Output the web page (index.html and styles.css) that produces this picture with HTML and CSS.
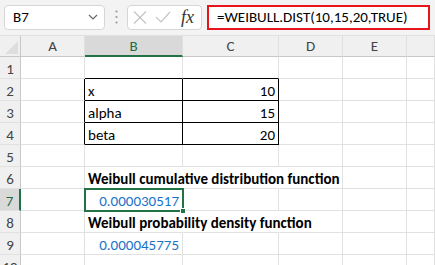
FILE: index.html
```html
<!DOCTYPE html>
<html lang="en">
<head>
    <meta charset="UTF-8">
    <title>WEIBULL.DIST</title>
    <link rel="stylesheet" href="styles.css">
</head>
<body>
    <div class="toolbar">
        <div class="namebox">
            <span>B7</span>
            <svg class="chev" width="10" height="6" viewBox="0 0 10 6"><path d="M1 1 L5 5 L9 1" fill="none" stroke="#666" stroke-width="1.2"/></svg>
        </div>
        <div class="sep">
            <svg width="3" height="14" viewBox="0 0 3 14"><circle cx="1.5" cy="1.5" r="1.1" fill="#999"/><circle cx="1.5" cy="7" r="1.1" fill="#999"/><circle cx="1.5" cy="12.5" r="1.1" fill="#999"/></svg>
        </div>
        <div class="fxbox">
            <svg width="14" height="13" viewBox="0 0 14 13"><path d="M1 0.5 L13 12.5 M13 0.5 L1 12.5" stroke="#c4c4c4" stroke-width="1.2" fill="none"/></svg>
            <svg width="16" height="12" viewBox="0 0 16 12"><path d="M1 6 L6 11 L15 1" stroke="#c4c4c4" stroke-width="1.2" fill="none"/></svg>
            <span class="fx">fx</span>
        </div>
        <div class="formula">=WEIBULL.DIST(10,15,20,TRUE)</div>
    </div>

    <div class="sheet">
        <!-- header -->
        <div class="corner"></div>
        <div class="colhead">A</div>
        <div class="colhead active">B</div>
        <div class="colhead">C</div>
        <div class="colhead">D</div>
        <div class="colhead">E</div>
        <div class="colhead"></div>

        <!-- 1 -->
        <div class="rowhead">1</div>
        <div class="cell"></div>
        <div class="cell bb"></div>
        <div class="cell bb"></div>
        <div class="cell"></div>
        <div class="cell"></div>
        <div class="cell"></div>

        <!-- 2 -->
        <div class="rowhead">2</div>
        <div class="cell br"></div>
        <div class="cell box">x</div>
        <div class="cell box num">10</div>
        <div class="cell"></div>
        <div class="cell"></div>
        <div class="cell"></div>

        <!-- 3 -->
        <div class="rowhead">3</div>
        <div class="cell br"></div>
        <div class="cell box">alpha</div>
        <div class="cell box num">15</div>
        <div class="cell"></div>
        <div class="cell"></div>
        <div class="cell"></div>

        <!-- 4 -->
        <div class="rowhead">4</div>
        <div class="cell br"></div>
        <div class="cell box">beta</div>
        <div class="cell box num">20</div>
        <div class="cell"></div>
        <div class="cell"></div>
        <div class="cell"></div>

        <!-- 5 -->
        <div class="rowhead">5</div>
        <div class="cell"></div>
        <div class="cell"></div>
        <div class="cell"></div>
        <div class="cell"></div>
        <div class="cell"></div>
        <div class="cell"></div>

        <!-- 6 -->
        <div class="rowhead">6</div>
        <div class="cell"></div>
        <div class="cell bold spill">Weibull cumulative distribution function</div>
        <div class="cell spill"></div>
        <div class="cell"></div>
        <div class="cell"></div>
        <div class="cell"></div>

        <!-- 7 -->
        <div class="rowhead active">7</div>
        <div class="cell"></div>
        <div class="cell num blue selected">0.000030517<div class="sel"><span class="handle"></span></div></div>
        <div class="cell"></div>
        <div class="cell"></div>
        <div class="cell"></div>
        <div class="cell"></div>

        <!-- 8 -->
        <div class="rowhead">8</div>
        <div class="cell"></div>
        <div class="cell bold spill">Weibull probability density function</div>
        <div class="cell spill"></div>
        <div class="cell"></div>
        <div class="cell"></div>
        <div class="cell"></div>

        <!-- 9 -->
        <div class="rowhead">9</div>
        <div class="cell"></div>
        <div class="cell num blue">0.000045775</div>
        <div class="cell"></div>
        <div class="cell"></div>
        <div class="cell"></div>
        <div class="cell"></div>

        <!-- 10 -->
        <div class="rowhead">10</div>
        <div class="cell"></div>
        <div class="cell"></div>
        <div class="cell"></div>
        <div class="cell"></div>
        <div class="cell"></div>
        <div class="cell"></div>
    </div>
</body>
</html>
```

FILE: styles.css
```css
* {
    box-sizing: border-box;
}

body {
    margin: 0;
    width: 435px;
    height: 265px;
    overflow: hidden;
    background: #ffffff;
    font-family: Carlito, Lato, "Liberation Sans", sans-serif;
    font-size: 15px;
    color: #000;
}

/* barra de fórmulas */
.toolbar {
    display: flex;
    align-items: center;
    height: 36px;
    padding: 0 5px 1px 4px;
    background: #f3f3f3;
    border-bottom: 1px solid #e0e0e0;
}

.namebox {
    display: flex;
    align-items: center;
    justify-content: space-between;
    width: 101px;
    height: 25px;
    padding: 0 6px 0 8px;
    background: #fff;
    border: 1px solid #d6d6d6;
    border-radius: 4px;
    font-size: 15px;
}

.sep {
    display: flex;
    justify-content: center;
    align-items: center;
    width: 22px;
}

.fxbox {
    display: flex;
    align-items: center;
    width: 75px;
    height: 25px;
    padding: 0 0 0 5px;
    gap: 8px;
    background: #fff;
    border: 1px solid #d6d6d6;
    border-radius: 4px;
}

.fx {
    font-family: "Liberation Serif", serif;
    font-style: italic;
    font-size: 18px;
    color: #333;
    margin-left: 2px;
}

.formula {
    flex: 1;
    height: 25px;
    margin-left: 5px;
    padding: 0 0 0 8px;
    line-height: 21px;
    background: #fff;
    border: 2px solid #e8141b;
    white-space: nowrap;
}

/* planilha */
.sheet {
    display: grid;
    grid-template-columns: 21px 64px 98px 96px 64px 64px 1fr;
    grid-template-rows: 21px repeat(10, 22px);
}

.corner,
.colhead {
    background: #f0f0f0;
    border-right: 1px solid #e0e0e0;
    border-bottom: 1px solid #c8c8c8;
}

.corner {
    position: relative;
    border-right-color: #c8c8c8;
}

.corner::after {
    content: "";
    position: absolute;
    right: 2px;
    bottom: 2px;
    border-left: 13px solid transparent;
    border-bottom: 13px solid #dedede;
}

.colhead {
    text-align: center;
    line-height: 21px;
    color: #444;
}

.colhead.active {
    background: #d9d9d9;
    color: #1e6b41;
    border-bottom: 2px solid #217346;
}

.rowhead {
    background: #f0f0f0;
    border-right: 1px solid #c8c8c8;
    border-bottom: 1px solid #e0e0e0;
    padding-top: 1px;
    text-align: center;
    line-height: 22px;
    color: #444;
}

.rowhead.active {
    background: #d9d9d9;
    color: #1e6b41;
    border-right: 2px solid #217346;
}

.cell {
    border-right: 1px solid #e1e1e1;
    border-bottom: 1px solid #e1e1e1;
    padding: 1px 3px 0;
    line-height: 22px;
    white-space: nowrap;
}

.num {
    text-align: right;
}

.blue {
    color: #1a73c9;
}

.bold {
    font-weight: bold;
}

.spill {
    border-right-color: transparent;
}

.bb {
    border-bottom-color: #000;
}

.br {
    border-right-color: #000;
}

.box {
    border-right-color: #000;
    border-bottom-color: #000;
}

.selected {
    position: relative;
}

.sel {
    position: absolute;
    left: -1px;
    top: -1px;
    right: -2px;
    bottom: -2px;
    border: 2px solid #217346;
}

.handle {
    position: absolute;
    right: -4px;
    bottom: -4px;
    width: 6px;
    height: 6px;
    background: #217346;
    border: 1px solid #fff;
}
```
